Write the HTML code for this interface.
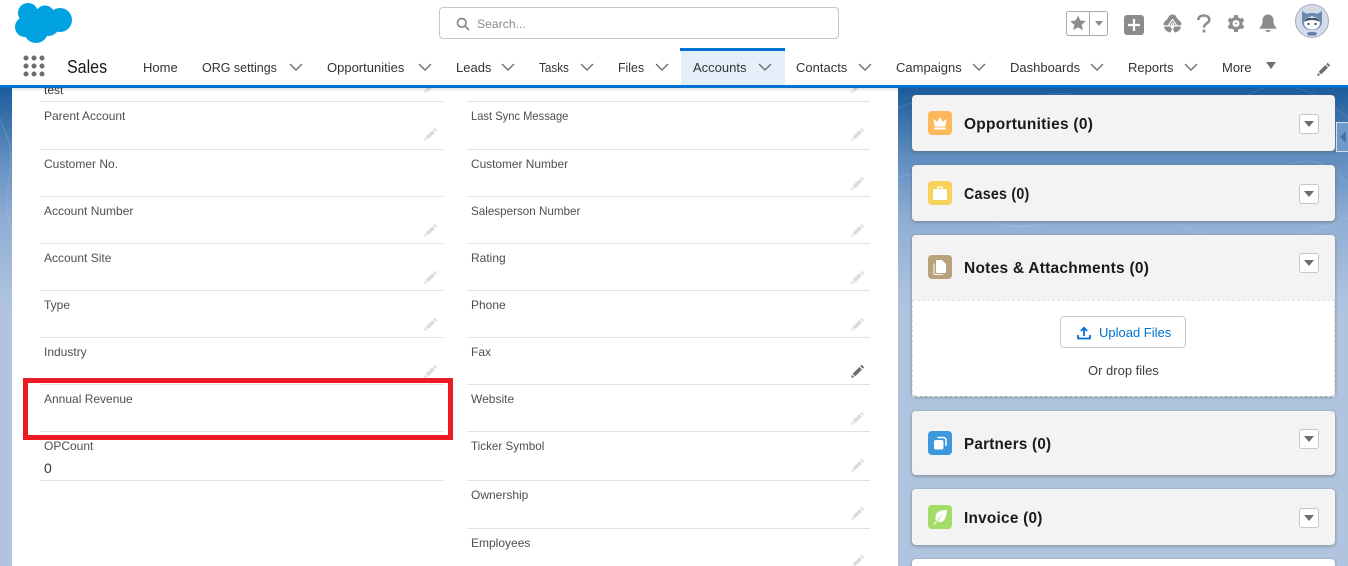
<!DOCTYPE html>
<html><head><meta charset="utf-8"><style>
html,body{margin:0;padding:0;width:1348px;height:566px;overflow:hidden}
body{position:relative;background:#b0c4df;font-family:"Liberation Sans",sans-serif;color:#16325c}
div,span,svg{position:absolute;display:block}
#w{left:0;top:0;width:1348px;height:566px;overflow:hidden}
#bg{left:0;top:88px;width:1348px;height:478px;background:linear-gradient(#1b5c9c 0,#5f8dbf 70px,#8fadd4 130px,#b0c4df 220px,#b0c4df 100%)}
#card{left:12px;top:88px;width:886px;height:478px;background:#fff}
#hd{left:0;top:0;width:1348px;height:85px;background:#fff}
#bar{left:0;top:85px;width:1348px;height:3px;background:#0070d2}
.n{top:60px;font-size:13px;line-height:16px;color:#333;white-space:nowrap}
.t{font-size:12px;line-height:16px;color:#4f4f4f;white-space:nowrap;transform-origin:0 50%}
.l{height:1px;width:403px;background:#e2e0e4}
.p{width:14px;height:14px}
.pn{left:912px;width:423px;background:#f3f3f3;border-radius:4px;box-shadow:0 1px 2px 1px rgba(90,90,90,.35)}
.ic{left:928px;width:24px;height:24px;border-radius:4px}
.h{left:964px;font-size:15.5px;font-weight:bold;line-height:20px;color:#1a1a1a;white-space:nowrap;letter-spacing:.25px;transform-origin:0 50%}
.b{left:1299px;width:18px;height:18px;background:#fff;border:1px solid #c9c7c5;border-radius:3px}
.b:after{content:"";position:absolute;left:4px;top:6px;border:5px solid transparent;border-top:6px solid #706e6b;border-bottom:0}
</style></head><body><div id="w">
<div id="bg"></div>
<svg style="left:898px;top:88px" width="450" height="180" fill="none" stroke="#fff" stroke-opacity=".13"><path d="M0 20C40 0 70 40 110 20S180 0 220 25 300 50 340 15 420 5 450 30M0 90C50 70 60 110 110 95S190 70 240 100 320 110 370 85 430 80 450 95M20 130C70 110 90 150 150 135S260 120 300 145 400 150 450 130"/></svg>
<svg style="left:0;top:88px" width="12" height="180" fill="none" stroke="#fff" stroke-opacity=".15"><path d="M0 30C6 50 12 50 10 80S2 120 12 140"/></svg>
<div id="card"></div>

<span class="t" style="left:44px;top:82px;color:#333">test</span>
<div class="l" style="left:40px;top:101px"></div>
<span class="t" style="left:44px;top:108px">Parent Account</span>
<div class="l" style="left:40px;top:149px"></div>
<span class="t" style="left:44px;top:156px">Customer No.</span>
<div class="l" style="left:40px;top:196px"></div>
<span class="t" style="left:44px;top:203px">Account Number</span>
<div class="l" style="left:40px;top:243px"></div>
<span class="t" style="left:44px;top:250px">Account Site</span>
<div class="l" style="left:40px;top:290px"></div>
<span class="t" style="left:44px;top:297px">Type</span>
<div class="l" style="left:40px;top:337px"></div>
<span class="t" style="left:44px;top:344px">Industry</span>
<div class="l" style="left:40px;top:384px"></div>
<span class="t" style="left:44px;top:391px">Annual Revenue</span>
<div class="l" style="left:40px;top:431px"></div>
<span class="t" style="left:44px;top:438px">OPCount</span>
<span style="left:44px;top:460px;font-size:14px;line-height:16px;color:#333">0</span>
<div class="l" style="left:40px;top:480px"></div>

<div class="l" style="left:467px;top:101px"></div>
<span class="t" style="left:471px;top:108px;transform:scaleX(.93)">Last Sync Message</span>
<div class="l" style="left:467px;top:149px"></div>
<span class="t" style="left:471px;top:156px;transform:scaleX(.99)">Customer Number</span>
<div class="l" style="left:467px;top:196px"></div>
<span class="t" style="left:471px;top:203px;transform:scaleX(.97)">Salesperson Number</span>
<div class="l" style="left:467px;top:243px"></div>
<span class="t" style="left:471px;top:250px">Rating</span>
<div class="l" style="left:467px;top:290px"></div>
<span class="t" style="left:471px;top:297px">Phone</span>
<div class="l" style="left:467px;top:337px"></div>
<span class="t" style="left:471px;top:344px">Fax</span>
<div class="l" style="left:467px;top:384px"></div>
<span class="t" style="left:471px;top:391px">Website</span>
<div class="l" style="left:467px;top:431px"></div>
<span class="t" style="left:471px;top:438px;transform:scaleX(.97)">Ticker Symbol</span>
<div class="l" style="left:467px;top:480px"></div>
<span class="t" style="left:471px;top:487px">Ownership</span>
<div class="l" style="left:467px;top:528px"></div>
<span class="t" style="left:471px;top:535px">Employees</span>

<svg width="0" height="0" style="position:absolute"><defs><path id="pen" d="M10.6.8l2.6 2.6-1.4 1.4-2.6-2.600zM8.4 3l2.6 2.600-6.800 6.800-2.600-2.600zM.9 10.600l2.500 2.500-3.200.8z"/></defs></svg>
<svg class="p" style="left:424px;top:79px" viewBox="0 0 14 14" fill="#dcdcdc"><use href="#pen"/></svg>
<svg class="p" style="left:851px;top:79px" viewBox="0 0 14 14" fill="#dcdcdc"><use href="#pen"/></svg>
<svg class="p" style="left:424px;top:127px" viewBox="0 0 14 14" fill="#dcdcdc"><use href="#pen"/></svg>
<svg class="p" style="left:424px;top:223px" viewBox="0 0 14 14" fill="#dcdcdc"><use href="#pen"/></svg>
<svg class="p" style="left:424px;top:270px" viewBox="0 0 14 14" fill="#dcdcdc"><use href="#pen"/></svg>
<svg class="p" style="left:424px;top:317px" viewBox="0 0 14 14" fill="#dcdcdc"><use href="#pen"/></svg>
<svg class="p" style="left:424px;top:364px" viewBox="0 0 14 14" fill="#dcdcdc"><use href="#pen"/></svg>
<svg class="p" style="left:851px;top:127px" viewBox="0 0 14 14" fill="#dcdcdc"><use href="#pen"/></svg>
<svg class="p" style="left:851px;top:176px" viewBox="0 0 14 14" fill="#dcdcdc"><use href="#pen"/></svg>
<svg class="p" style="left:851px;top:223px" viewBox="0 0 14 14" fill="#dcdcdc"><use href="#pen"/></svg>
<svg class="p" style="left:851px;top:270px" viewBox="0 0 14 14" fill="#dcdcdc"><use href="#pen"/></svg>
<svg class="p" style="left:851px;top:317px" viewBox="0 0 14 14" fill="#dcdcdc"><use href="#pen"/></svg>
<svg class="p" style="left:851px;top:364px" viewBox="0 0 14 14" fill="#706e6b"><use href="#pen"/></svg>
<svg class="p" style="left:851px;top:411px" viewBox="0 0 14 14" fill="#dcdcdc"><use href="#pen"/></svg>
<svg class="p" style="left:851px;top:458px" viewBox="0 0 14 14" fill="#dcdcdc"><use href="#pen"/></svg>
<svg class="p" style="left:851px;top:506px" viewBox="0 0 14 14" fill="#dcdcdc"><use href="#pen"/></svg>
<svg class="p" style="left:851px;top:554px" viewBox="0 0 14 14" fill="#dcdcdc"><use href="#pen"/></svg>

<div style="left:23px;top:378px;width:420px;height:52px;border:5px solid #ed1c24"></div>

<div class="pn" style="top:95px;height:56px"></div>
<div class="ic" style="top:111px;background:#fcb95b"></div>
<svg style="left:928px;top:111px" width="24" height="24" fill="#fff"><path d="M5.500 8l3.500 3 3-5 3 5 3.500-3-1 7.500H6.500z"/><rect x="6.500" y="16.500" width="11" height="2"/></svg>
<span class="h" style="top:115px">Opportunities (0)</span>
<div class="b" style="top:114px"></div>
<div style="left:1336px;top:122px;width:12px;height:30px;background:#6d9ac8;border:1px solid #d5dde8;border-right:0;box-sizing:border-box"></div>
<svg style="left:1339px;top:130px" width="9" height="14"><path d="M7 1L1 7l6 6z" fill="#3f77ad"/></svg>

<div class="pn" style="top:165px;height:56px"></div>
<div class="ic" style="top:181px;background:#f7d25c"></div>
<svg style="left:928px;top:181px" width="24" height="24" fill="#fff"><rect x="5" y="8" width="14" height="11" rx="1"/><path d="M9 7.500V5.500h6v2h-1.200V6.700h-3.600V7.500z"/></svg>
<span class="h" style="top:185px;transform:scaleX(.92)">Cases (0)</span>
<div class="b" style="top:184px"></div>

<div class="pn" style="top:235px;height:161px;background:#fff"></div>
<div style="left:912px;top:235px;width:423px;height:65px;background:#f3f3f3;border-radius:4px 4px 0 0"></div>
<div style="left:912px;top:300px;width:421px;height:95px;border:1px dashed #e2e2e2"></div>
<div class="ic" style="top:255px;background:#b8a27c"></div>
<svg style="left:928px;top:255px" width="24" height="24" fill="#fff"><path d="M9 5h5l4 4v8a1 1 0 0 1-1 1H9a1 1 0 0 1-1-1V6a1 1 0 0 1 1-1z"/><path d="M6 8.500v10a1 1 0 0 0 1 1h8" fill="none" stroke="#fff" stroke-opacity=".75" stroke-width="1.300"/></svg>
<span class="h" style="top:259px">Notes &amp; Attachments (0)</span>
<div class="b" style="top:253px"></div>
<div style="left:1060px;top:316px;width:124px;height:30px;background:#fff;border:1px solid #c9c7c5;border-radius:4px"></div>
<svg style="left:1077px;top:326px" width="14" height="14" fill="none" stroke="#0070d2" stroke-width="1.800"><path d="M7 10V2M3.800 5L7 1.800 10.200 5"/><path d="M1 9v3.500h12V9"/></svg>
<span style="left:1099px;top:325px;font-size:13px;line-height:16px;color:#0070d2;white-space:nowrap">Upload Files</span>
<span style="left:1088px;top:363px;font-size:13px;line-height:16px;color:#3e3e3c;white-space:nowrap">Or drop files</span>

<div class="pn" style="top:411px;height:64px"></div>
<div class="ic" style="top:431px;background:#3c97dd"></div>
<svg style="left:928px;top:431px" width="24" height="24"><rect x="6" y="9" width="9.500" height="9.500" rx="2" fill="#fff"/><path d="M9.500 6.500h6a2.500 2.500 0 0 1 2.500 2.500v6" fill="none" stroke="#fff" stroke-width="1.500"/></svg>
<span class="h" style="top:435px;transform:scaleX(.98)">Partners (0)</span>
<div class="b" style="top:429px"></div>

<div class="pn" style="top:489px;height:56px"></div>
<div class="ic" style="top:505px;background:#a3dd67"></div>
<svg style="left:928px;top:505px" width="24" height="24" fill="#fff"><path d="M19 5C12 5 8 7 7.500 12c-.2 2 .5 3.500 1.500 4.500C11 12 13 10.500 16 9c-3 2-5 4.500-6 8 5 1 8-2 9-12zM5.500 20c.5-1.500 1.500-3 2.500-4l.8.8c-1 1-1.800 2-2.300 3.500z"/></svg>
<span class="h" style="top:509px;transform:scaleX(.99)">Invoice (0)</span>
<div class="b" style="top:508px"></div>

<div class="pn" style="top:559px;height:7px;background:#fff;border-radius:4px 4px 0 0"></div>

<div id="hd"></div>
<div style="left:12px;top:88px;width:886px;height:4px;background:linear-gradient(rgba(0,0,0,.1),rgba(0,0,0,0))"></div>
<div id="bar"></div>

<svg style="left:0;top:0" width="80" height="46" fill="#00a1e0"><circle cx="28" cy="13" r="10"/><circle cx="45" cy="15" r="9.500"/><circle cx="60" cy="20" r="12"/><circle cx="25" cy="27" r="10"/><circle cx="36" cy="31" r="12"/><circle cx="48" cy="24" r="12"/><circle cx="36" cy="20" r="11"/></svg>

<div style="left:439px;top:7px;width:398px;height:30px;border:1px solid #c9c7c5;border-radius:4px;background:#fff"></div>
<svg style="left:456px;top:17px" width="14" height="14" fill="none" stroke="#8a8a8a" stroke-width="1.700"><circle cx="5.800" cy="5.800" r="4.300"/><path d="M9 9l4 4"/></svg>
<span style="left:477px;top:16px;font-size:12px;line-height:16px;color:#8a8a8a;letter-spacing:.1px">Search...</span>

<div style="left:1066px;top:11px;width:40px;height:23px;border:1px solid #aaa;border-radius:3px"></div>
<div style="left:1089px;top:12px;width:1px;height:23px;background:#aaa"></div>
<svg style="left:1069px;top:14px" width="18" height="18" fill="#8c8c8c"><path d="M9 1.500l2.300 5 5.500.6-4.100 3.700 1.200 5.400L9 13.400l-4.900 2.800 1.200-5.400L1.200 7.100l5.500-.6z"/></svg>
<svg style="left:1094px;top:20px" width="10" height="7" fill="#8c8c8c"><path d="M1 1h8L5 6z"/></svg>
<div style="left:1124px;top:15px;width:20px;height:20px;background:#8c8c8c;border-radius:3px"></div>
<svg style="left:1124px;top:15px" width="20" height="20" stroke="#fff" stroke-width="2.200"><path d="M10 4v12M4 10h12"/></svg>
<svg style="left:1162px;top:13px" width="21" height="21"><path d="M10.500 1.500c2.500 0 3.500 1.500 4.500 3.500 1.200 2.200 4.500 3.500 4.500 6 0 .8-.4 1.200-1 1.200H2.500c-.6 0-1-.4-1-1.200 0-2.500 3.300-3.800 4.500-6 1-2 2-3.500 4.500-3.500z" fill="#8c8c8c"/><path d="M2 13.500h6l2 2.500-1.500 3.500C5 19 2.500 17 2 13.500zM19 13.500h-6.500L11 16l1.500 3.500c3.500-.5 6-2.500 6.500-6z" fill="#8c8c8c"/><path d="M6.500 12l4-5.500 4 5.500M9 12l1.500-2 1.500 2" fill="none" stroke="#fff" stroke-width="1.100"/></svg>
<svg style="left:1196px;top:14px" width="16" height="20" fill="none" stroke="#8c8c8c" stroke-width="2.600"><path d="M2.300 6C2.300 3 4.800 1.500 7.800 1.500s5.500 1.500 5.500 4.300c0 3.700-5.300 3.400-5.300 7.700"/><path d="M8 15.500v3"/></svg>
<svg style="left:1227px;top:14px" width="18" height="19"><g fill="#8c8c8c"><circle cx="9" cy="9.500" r="6.500"/><rect x="7" y="1" width="4" height="17" rx=".8"/><rect x="7" y="1" width="4" height="17" rx=".8" transform="rotate(60 9 9.500)"/><rect x="7" y="1" width="4" height="17" rx=".8" transform="rotate(120 9 9.500)"/></g><circle cx="9" cy="9.500" r="3.500" fill="#fff"/><path d="M9.800 7l-2 3h1.500l-.7 2 2-3H9.100z" fill="#8c8c8c"/></svg>
<svg style="left:1258px;top:13px" width="20" height="20" fill="#8c8c8c"><path d="M10 1.500c3.500 0 5.500 2.500 5.500 6 0 4 1 5.500 3 7.500v.8h-17V15c2-2 3-3.500 3-7.500 0-3.500 2-6 5.500-6z"/><path d="M7.500 17h5c0 1.200-1.200 2-2.500 2s-2.500-.8-2.500-2z"/></svg>
<svg style="left:1295px;top:4px" width="34" height="34"><circle cx="17" cy="17" r="16.500" fill="#d3dbe7" stroke="#a8b0bd"/><path d="M7 7l5 3c3-1.500 7-1.500 10 0l5-3v10c0 6-4 9-10 9S7 23 7 17z" fill="#6b8ab2"/><ellipse cx="17" cy="19" rx="8" ry="6.500" fill="#fff"/><path d="M9 18c1.500-4 6-5.500 8-3.500 2-2 6.500-.5 8 3.500-3-1.500-5-2-8-2s-5 .5-8 2z" fill="#34506f"/><circle cx="13.500" cy="20" r="1.100" fill="#2c3e5c"/><circle cx="20.500" cy="20" r="1.100" fill="#2c3e5c"/><path d="M12 29c3-1.500 7-1.500 10 0l-1 2.500h-8z" fill="#5f7fa8"/></svg>

<svg style="left:23px;top:55px" width="24" height="24" fill="#706e6b"><circle cx="3" cy="3" r="2.500"/><circle cx="11" cy="3" r="2.500"/><circle cx="19" cy="3" r="2.500"/><circle cx="3" cy="11" r="2.500"/><circle cx="11" cy="11" r="2.500"/><circle cx="19" cy="11" r="2.500"/><circle cx="3" cy="19" r="2.500"/><circle cx="11" cy="19" r="2.500"/><circle cx="19" cy="19" r="2.500"/></svg>
<span style="left:67px;top:56px;font-size:18px;line-height:22px;color:#1a1a1a;transform:scaleX(.89);transform-origin:0 50%">Sales</span>

<div style="left:681px;top:48px;width:104px;height:37px;background:#e5eff9"></div>
<div style="left:680px;top:48px;width:105px;height:3px;background:#0070d2"></div>

<span class="n" style="left:143px">Home</span>
<span class="n" style="left:202px;transform:scaleX(.96);transform-origin:0 50%">ORG settings</span>
<span class="n" style="left:327px">Opportunities</span>
<span class="n" style="left:456px">Leads</span>
<span class="n" style="left:539px;transform:scaleX(.9);transform-origin:0 50%">Tasks</span>
<span class="n" style="left:618px;transform:scaleX(.95);transform-origin:0 50%">Files</span>
<span class="n" style="left:693px">Accounts</span>
<span class="n" style="left:796px">Contacts</span>
<span class="n" style="left:896px">Campaigns</span>
<span class="n" style="left:1010px">Dashboards</span>
<span class="n" style="left:1128px">Reports</span>
<span class="n" style="left:1222px">More</span>

<svg style="left:0;top:60px" width="1348" height="16" fill="none" stroke="#706e6b" stroke-width="1.400"><path d="M290 4l6 6 6-6M419 4l6 6 6-6M502 4l6 6 6-6M581 4l6 6 6-6M656 4l6 6 6-6M759 4l6 6 6-6M859 4l6 6 6-6M973 4l6 6 6-6M1091 4l6 6 6-6M1185 4l6 6 6-6"/><path d="M1266 2h10l-5 7z" fill="#706e6b" stroke="none"/></svg>
<svg class="p" style="left:1317px;top:62px" viewBox="0 0 14 14" fill="#706e6b"><use href="#pen"/></svg>
</div></body></html>
